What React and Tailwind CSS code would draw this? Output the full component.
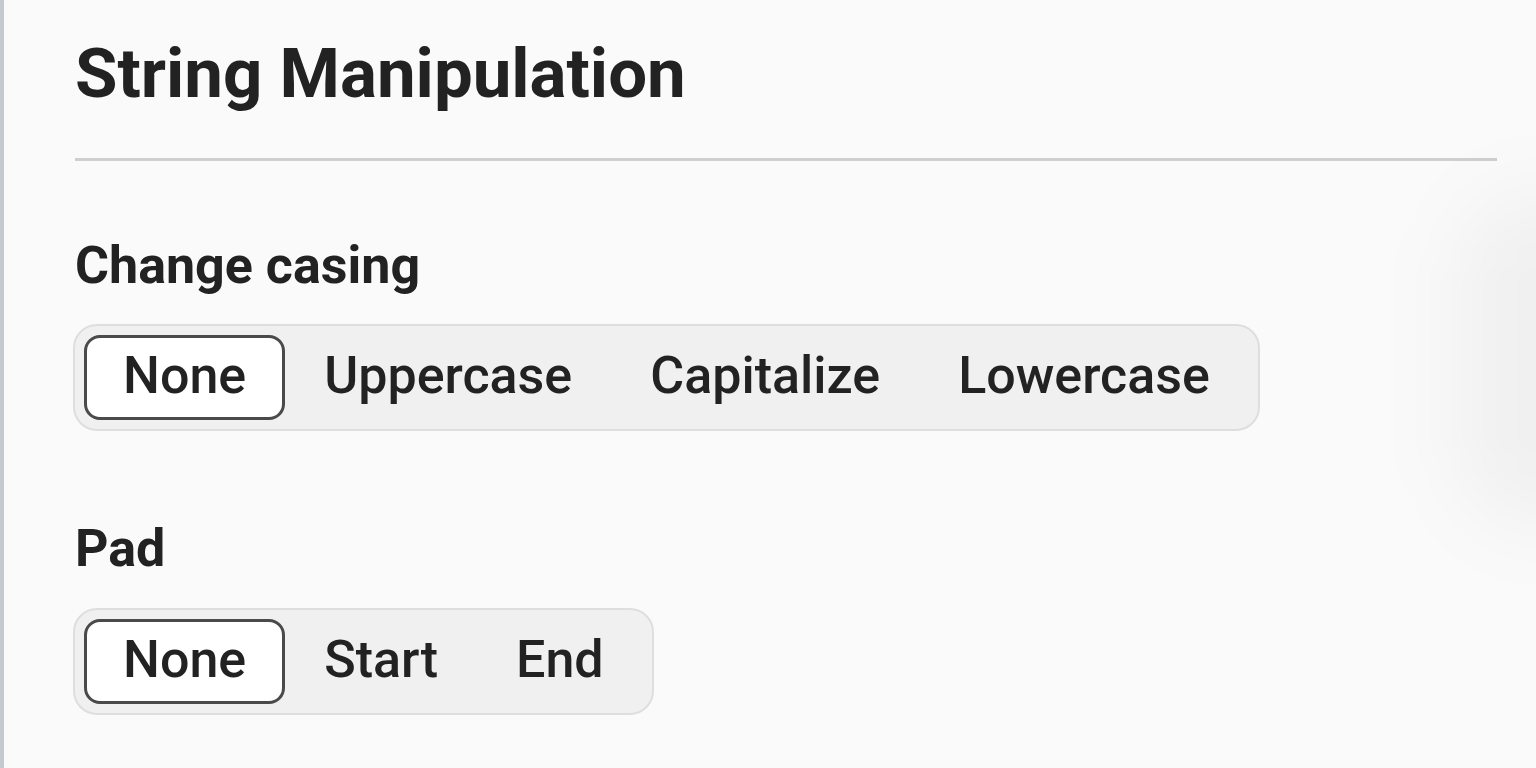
import React from "react";

function Segmented({ options }) {
  return (
    <div className="-ml-[2px] inline-flex h-[107px] items-center rounded-[24px] border-2 border-[#dedede] bg-[#f0f0f0] p-[9px]">
      {options.map((o, i) => (
        <div
          key={o}
          className={
            i === 0
              ? "flex h-[85px] items-center rounded-[16px] border-[3px] border-[#4a4a4a] bg-white px-[36px] pb-[3px] text-[52px] font-medium leading-none text-[#222]"
              : "flex h-[85px] items-center rounded-[16px] border-[3px] border-transparent px-[36px] pb-[3px] text-[52px] font-medium leading-none text-[#222]"
          }
        >
          {o}
        </div>
      ))}
    </div>
  );
}

export default function App() {
  return (
    <div
      className="relative flex h-[768px] w-[1536px] overflow-hidden bg-[#fafafa]"
      style={{ fontFamily: "Roboto, 'Liberation Sans', sans-serif" }}
    >
      <div className="w-[4px] shrink-0 bg-[#c4c9d0]" />
      <div className="flex flex-1 flex-col items-start pl-[71px] pr-[39px] pt-[39px]">
        <h1 className="text-[69px] font-bold leading-none text-[#222]">String Manipulation</h1>
        <div className="mt-[50px] h-[3px] w-full bg-[#cfcfcf]" />
        <div className="mt-[79px] text-[52px] font-bold leading-none text-[#222]">Change casing</div>
        <div className="mt-[32px]">
          <Segmented options={["None", "Uppercase", "Capitalize", "Lowercase"]} />
        </div>
        <div className="mt-[92px] text-[52px] font-bold leading-none text-[#222]">Pad</div>
        <div className="mt-[33px]">
          <Segmented options={["None", "Start", "End"]} />
        </div>
      </div>
      <div className="pointer-events-none absolute right-[-90px] top-[190px] h-[340px] w-[170px] rounded-full bg-black/[0.04] blur-2xl" />
    </div>
  );
}
